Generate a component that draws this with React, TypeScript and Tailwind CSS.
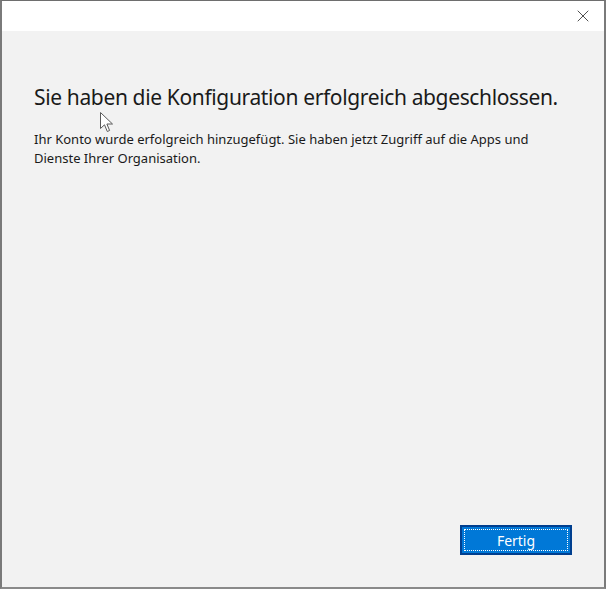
import { X } from "lucide-react";

function Cursor() {
  return (
    <svg
      className="pointer-events-none absolute left-[100px] top-[112px]"
      width="14"
      height="22"
      viewBox="0 0 14 22"
    >
      <path
        d="M0.5 0.5 L0.5 16.5 L4.5 12.8 L7.3 19.5 L9.6 18.5 L6.9 12 L12.5 12 Z"
        fill="#ffffff"
        stroke="#5a5a5a"
        strokeWidth="1"
        strokeLinejoin="round"
      />
    </svg>
  );
}

export default function App() {
  return (
    <div className="relative h-[591px] w-[606px] bg-white font-['Noto_Sans',sans-serif]">
      <div className="flex h-[589px] w-[606px] flex-col border-x-2 border-t border-b-2 border-x-[#7a7a7a] border-t-[#6e6e6e] border-b-[#8a8a8a]">
        {/* title bar */}
        <div className="flex h-[30px] shrink-0 items-center justify-end bg-white pr-[11px]">
          <X className="h-[20px] w-[20px] text-[#2b2b2b]" strokeWidth={1} />
        </div>

        {/* content */}
        <div className="flex flex-1 flex-col bg-[#f2f2f2] px-[32px] pb-[32px]">
          <h1 className="mt-[52px] whitespace-nowrap text-[21px] leading-[28px] tracking-[-0.36px] text-[#1a1a1a]">
            Sie haben die Konfiguration erfolgreich abgeschlossen.
          </h1>
          <p className="mt-[19px] w-[520px] text-[13px] leading-[19px] text-[#1a1a1a]">
            Ihr Konto wurde erfolgreich hinzugefügt. Sie haben jetzt Zugriff auf die Apps und Dienste
            Ihrer Organisation.
          </p>

          <div className="mt-auto flex justify-end">
            <button className="flex h-[30px] w-[112px] items-center justify-center border-2 border-[#003f8f] bg-[#0078d7] p-[2px]">
              <span className="flex h-full w-full items-center justify-center border border-dotted border-white text-[14px] text-white">
                Fertig
              </span>
            </button>
          </div>
        </div>
      </div>
      <Cursor />
    </div>
  );
}
